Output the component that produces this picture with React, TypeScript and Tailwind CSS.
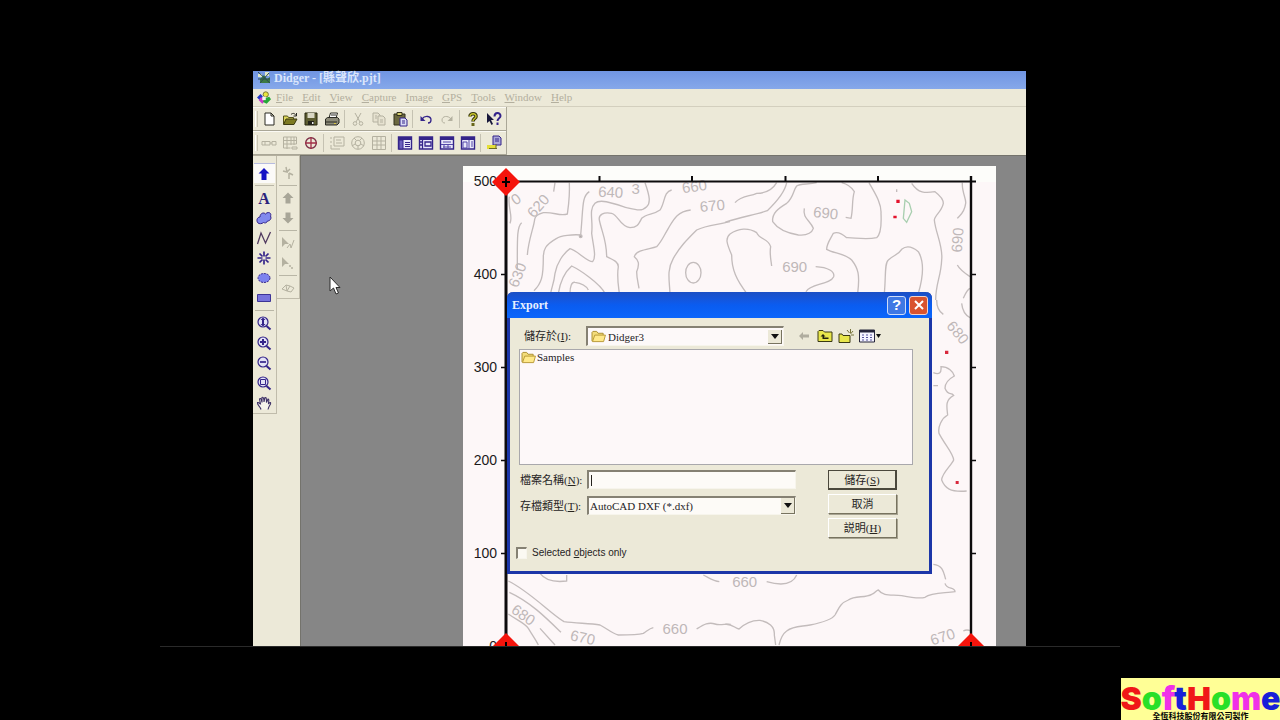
import type { ReactNode } from "react";

const UI = "font-['Liberation_Serif','Noto_Sans_CJK_TC',serif]";

type Glyph = { name: string; art: ReactNode };

function Pic({ children }: { children: ReactNode }) {
  return (
    <svg viewBox="0 0 16 16" className="h-4 w-4 shrink-0" fill="none" aria-hidden="true">
      {children}
    </svg>
  );
}

const INK = "#2a2a22";
const NAVY = "#34248a";
const DIM = "#b4b1a0";

const standardGroups: Glyph[][] = [
  [
    { name: "New", art: <path d="M4 2h6l3 3v9H4zM10 2v3h3" fill="#fff" stroke={INK} /> },
    {
      name: "Open",
      art: (
        <>
          <path d="M1.5 13V5h4l1 1.500h5V8" fill="#dcd65a" stroke="#55521c" />
          <path d="M1.500 13.500L4 8h11l-3 5.500z" fill="#7d7a22" stroke="#3c3a12" />
          <path d="M9 3.500c2-2 4-1 5 1M14.500 2v3h-3" stroke={INK} />
        </>
      ),
    },
    {
      name: "Save",
      art: (
        <>
          <path d="M2 2h12v12H2z" fill="#5c5c30" stroke="#26260f" />
          <path d="M4.500 2h7v5h-7z" fill="#d9d7c4" />
          <path d="M5 10h6v4H5z" fill="#23231a" />
          <path d="M9 11h1.500v2H9z" fill="#eee" />
        </>
      ),
    },
    {
      name: "Print",
      art: (
        <>
          <path d="M5 7l1.500-5h7L12 7" fill="#fff" stroke={INK} />
          <path d="M1.500 8l2-1.500h10L15 8v4l-2 2H1.500z" fill="#8c8a78" stroke={INK} />
          <path d="M2 11h11M7 4h5" stroke={INK} />
          <path d="M10 12.500h2" stroke="#d9c640" />
        </>
      ),
    },
  ],
  [
    {
      name: "Cut",
      art: (
        <>
          <path d="M5 2l5 9M11 2L6 11" stroke={DIM} />
          <circle cx="5" cy="12.500" r="1.800" stroke={DIM} />
          <circle cx="11" cy="12.500" r="1.800" stroke={DIM} />
        </>
      ),
    },
    {
      name: "Copy",
      art: (
        <>
          <path d="M2 2h5l2 2v7H2z" fill="#e6e2d0" stroke={DIM} />
          <path d="M7 5h5l2 2v7H7z" fill="#e6e2d0" stroke={DIM} />
          <path d="M4 5h2M4 7h2M9 9h3M9 11h3" stroke={DIM} />
        </>
      ),
    },
    {
      name: "Paste",
      art: (
        <>
          <path d="M2 3h11v11H2z" fill="#6b6840" stroke="#33311c" />
          <path d="M5 1.500h5v3H5z" fill="#d8d070" stroke="#33311c" />
          <path d="M8 7h5l2 2v6H8z" fill="#d9dbf5" stroke={NAVY} />
          <path d="M10 10h3M10 12h3" stroke={NAVY} />
        </>
      ),
    },
  ],
  [
    {
      name: "Undo",
      art: (
        <>
          <path d="M4 8c3-4 9-3 9 1 0 2-1 3-3 3" stroke={NAVY} strokeWidth="1.300" />
          <path d="M2.500 5v5h5z" fill={NAVY} />
        </>
      ),
    },
    {
      name: "Redo",
      art: (
        <>
          <path d="M12 8C9 4 3 5 3 9c0 2 1 3 3 3" stroke={DIM} />
          <path d="M13.500 5v5h-5z" fill={DIM} />
        </>
      ),
    },
  ],
  [
    {
      name: "Help",
      art: (
        <>
          <path d="M5 5.500C5 1.500 11.500 2 11 5.500 11 7.500 8 7.500 8 10.500" stroke="#38370f" strokeWidth="3.600" />
          <path d="M5 5.500C5 1.500 11.500 2 11 5.500 11 7.500 8 7.500 8 10" stroke="#c9c62a" strokeWidth="1.400" />
          <path d="M6.500 12h3v3h-3z" fill="#68661a" />
        </>
      ),
    },
    {
      name: "Context help",
      art: (
        <>
          <path d="M1 2v10l2.500-2 2 4 1.500-1-2-4h3z" fill="#17173a" />
          <path d="M8.500 5.500c0-4.500 6-4.500 6-.5 0 2.500-3 2-3 5M11.500 11.500v2.500" stroke={NAVY} strokeWidth="2" />
        </>
      ),
    },
  ],
];

const panel = (inner: ReactNode) => (
  <>
    <path d="M1.500 2h13v12h-13z" fill="#e9e8fa" stroke={NAVY} strokeWidth="1.400" />
    <path d="M1 2h14v3H1z" fill={NAVY} />
    {inner}
  </>
);

const digitizeGroups: Glyph[][] = [
  [
    { name: "Tablet", art: <path d="M1 6.500h8v3.500H1zM4 6.500V10M9 8h2M11 6.500h4V10h-4z" stroke={DIM} /> },
    { name: "Calibrate grid", art: <path d="M1.500 2h13v7h-13zM5 2v12M9 2v8M12 2v8M1.500 5.500h13M1.500 9v4h7M10 12h5v2h-5z" stroke={DIM} /> },
    {
      name: "Calibrate",
      art: (
        <>
          <circle cx="8" cy="8" r="5.300" stroke="#7c2d45" strokeWidth="1.400" />
          <path d="M8 2v12M2 8h12" stroke="#a13048" strokeWidth="1.300" />
        </>
      ),
    },
  ],
  [
    { name: "Image layers", art: <path d="M5 2h10v9H5zM2 2v2M2 6v2M2 10v4h9M7 5h5M7 8h6" stroke={DIM} /> },
    {
      name: "Wheel",
      art: (
        <>
          <circle cx="8" cy="8" r="6.300" stroke={DIM} />
          <circle cx="8" cy="8" r="2.800" stroke={DIM} />
          <path d="M6 5L4 3M10 5l2-2M5 9l-3 2M11 9l3 2M8 11v3" stroke={DIM} />
        </>
      ),
    },
    { name: "Grid", art: <path d="M1.500 1.500h13v13h-13zM6 1.500v13M10 1.500v13M1.500 6h13M1.500 10h13" stroke={DIM} /> },
  ],
  [
    { name: "Left pane", art: panel(<path d="M2 5h4v9H2zM8 7.500h5M8 9.500h5M8 11.500h5" fill="#6b60bd" stroke={NAVY} />) },
    { name: "Wide pane", art: panel(<path d="M4.500 5v9M7 7h6v4H7zM2 7h2M2 10h2" stroke={NAVY} strokeWidth="1.300" />) },
    { name: "Bottom pane", art: panel(<path d="M2 9.500h12M4 7h8M4 12h8M5 10v3M9 10v3" stroke="#5347a8" />) },
    { name: "Data pane", art: panel(<path d="M3 7h4v6H3zM9 5v9M11 7h2M11 9h2M11 11h2" stroke="#5347a8" />) },
  ],
  [
    {
      name: "Export image",
      art: (
        <>
          <path d="M7 1h6l2 2v7H7z" fill="#aaa7d8" stroke={NAVY} />
          <path d="M9 4h4M9 6h4" stroke={NAVY} />
          <path d="M1 10h9v4H1z" fill="#e5df38" />
          <path d="M3 13.500h8M10 9v4" stroke="#6d6922" />
        </>
      ),
    },
  ],
];

const lens = (inner: ReactNode) => (
  <>
    <circle cx="7" cy="7" r="5" fill="#e2e1f5" stroke={NAVY} strokeWidth="1.200" />
    <path d="M10.500 11l4 3.500" stroke={NAVY} strokeWidth="2" />
    {inner}
  </>
);

const drawTools: Glyph[][] = [
  [{ name: "Select", art: <path d="M8 2l5.500 5.500H10.500V14h-5V7.500H2.500z" fill="#1512c4" /> }],
  [
    { name: "Text", art: <text x="8" y="13.500" textAnchor="middle" fontSize="16" fontWeight="700" fontFamily="Liberation Serif, serif" fill="#2b237c">A</text> },
    { name: "Area", art: <path d="M2 13C0 11 1 7 4 7c0-4 4-5 5.500-3C12 1 16 3 14.500 6c1.500 3-1 5-3 5-1 2.500-3 2-4 1.500C6 14 3 14 2 13z" fill="#8189ee" stroke={NAVY} /> },
    { name: "Polyline", art: <path d="M1.500 14L5 3l4.500 10L14.500 2" stroke="#50395f" strokeWidth="1.300" /> },
    { name: "Point", art: <path d="M8 1.500v5M8 9.500v5M1.500 8h5M9.500 8h5M3.500 3.500l3 3M12.500 3.500l-3 3M3.500 12.500l3-3M12.500 12.500l-3-3" stroke={NAVY} strokeWidth="1.700" /> },
    { name: "Ellipse", art: <ellipse cx="8" cy="8" rx="6" ry="4.500" fill="#7c82ee" stroke={NAVY} strokeDasharray="2 1" /> },
    { name: "Rectangle", art: <path d="M1.500 4.500h13v7h-13z" fill="#7773dc" stroke="#3d3496" /> },
  ],
  [
    { name: "Zoom extents", art: lens(<path d="M7 2.500L9.500 5h-1.500v4h1.500L7 11.500 4.500 9H6V5H4.500z" fill={NAVY} />) },
    { name: "Zoom in", art: lens(<path d="M7 4v6M4 7h6" stroke={NAVY} strokeWidth="2" />) },
    { name: "Zoom out", art: lens(<path d="M4 7h6" stroke={NAVY} strokeWidth="1.700" />) },
    { name: "Zoom area", art: lens(<path d="M4.500 4.500h5v5h-5z" stroke={NAVY} />) },
    { name: "Pan", art: <path d="M5 14.500C4 11 1 10 1.500 7.500 3 7 4 9 4.500 9L3.500 4C5 2.500 5.500 5 6 7.500L6 2.500C7.500 1.500 8 4 8 7l1-4.500C10.500 2 10.500 5 10.500 7.500L12 4c1.500 0 .5 3 .5 4.500 2-1.500 2.500-1 2 .5-1 2-2 3-2.500 5.500" fill="#f6f4ec" stroke="#3d3066" strokeWidth="1.100" /> },
  ],
];

const editTools: Glyph[][] = [
  [{ name: "Reshape", art: <path d="M6 2l1 5-4-1M7 7l3-3M9 8l4 2M9 8v6" stroke={DIM} strokeWidth="1.500" /> }],
  [
    { name: "Move up", art: <path d="M8 2.500l5.500 5.500h-3v5.500h-5V8h-3z" fill="#a8a698" /> },
    { name: "Move down", art: <path d="M8 13.500L2.500 8h3V2.500h5V8h3z" fill="#a8a698" /> },
  ],
  [
    { name: "Node edit", art: <><path d="M2 2v10l3-3h4z" fill={DIM} /><path d="M7 13l3-4 1 4 3-8" stroke={DIM} /></> },
    { name: "Node pick", art: <><path d="M2 2v10l3-3h4z" fill={DIM} /><path d="M9 11h2M11 13h2" stroke={DIM} strokeWidth="1.500" /></> },
  ],
  [{ name: "Join", art: <path d="M2 9l4-4 4 1 4 2-3 4-4-1zM6 5l1 6M10 6l-3 5" stroke={DIM} /> }],
];

function ToolRow({ groups, label }: { groups: Glyph[][]; label: string }) {
  return (
    <div role="toolbar" aria-label={label} className="flex h-6 items-center border-r border-b border-[#aaa797] pl-[2px] shadow-[inset_0_1px_#fbfaf4]">
      <span className="h-4 w-[3px] border-x border-l-white border-r-[#c9c5b4]" />
      {groups.map((g, i) => (
        <div key={i} className="flex items-center">
          {i > 0 && <span className="mx-[2px] h-[18px] w-px bg-[#c5c2b2]" />}
          {g.map((t) => (
            <button key={t.name} aria-label={t.name} className="flex h-5 w-[21px] items-center justify-center">
              <Pic>{t.art}</Pic>
            </button>
          ))}
        </div>
      ))}
    </div>
  );
}

function ToolColumn({ groups, label, active }: { groups: Glyph[][]; label: string; active?: string }) {
  return (
    <div role="toolbar" aria-label={label} className="flex flex-1 flex-col self-start border-r border-b border-[#c0bcab] pt-[7px]">
      {groups.map((g, i) => (
        <div key={i} className="flex flex-col">
          {i > 0 && <span className="mx-[2px] my-[2px] h-px bg-[#b9b6a6]" />}
          {g.map((t) => (
            <button
              key={t.name}
              aria-label={t.name}
              className={t.name === active ? "mx-px flex h-5 items-center justify-center border-t border-[#b7bce0] bg-[#fbfaf8]" : "mx-px flex h-5 items-center justify-center"}
            >
              <Pic>{t.art}</Pic>
            </button>
          ))}
        </div>
      ))}
    </div>
  );
}

const menus = ["File", "Edit", "View", "Capture", "Image", "GPS", "Tools", "Window", "Help"];

function Num({ x, y, r = 0, children }: { x: number; y: number; r?: number; children: string }) {
  return (
    <text
      x={x}
      y={y + 15}
      transform={`rotate(${r} ${x} ${y})`}
      textAnchor="middle"
      fontFamily="Liberation Sans, sans-serif"
      fontSize="45"
      fill="#bfb8b8"
      stroke="none"
    >
      {children}
    </text>
  );
}

function Diamond({ x, y }: { x: number; y: number }) {
  return (
    <g>
      <path d={`M${x} ${y - 14}l14 14-14 14-14-14z`} fill="#f5140c" />
      <path d={`M${x - 4} ${y}h8M${x} ${y - 5}v10`} stroke="#000" strokeWidth="2" />
    </g>
  );
}

function ContourMap() {
  return (
    <svg viewBox="463 166 533 480" className="h-[480px] w-[533px] shrink-0 bg-[#fdf7f8]" fill="none" role="img" aria-label="Contour map">
      <path d="M463 166h533v16H463z" fill="#fdfdfa" />
      <g stroke="#c3bcbc" strokeWidth="4">
        <g transform="translate(460 160) scale(.33333)">
          <path d="M328 68C330 110 325 140 322 162C300 170 280 155 250 158C235 162 225 170 224 178C222 200 205 240 202 285M285 68L281 95" />
          <path d="M185 188C170 200 172 240 172 330M148 110C142 140 160 170 150 190" />
          <path d="M388 95C365 110 370 140 362 225C340 222 300 228 290 235C255 255 250 270 250 290C250 350 245 370 222 392" />
          <path d="M555 68C570 110 572 130 560 140C545 155 530 150 500 143C460 130 420 115 405 130C385 150 400 180 395 220C400 260 410 290 398 305C380 305 350 270 330 266C310 280 290 310 285 340C282 370 275 380 272 400" />
          <path d="M635 90C610 95 615 130 600 150C580 165 560 160 545 175C535 195 530 203 510 203C480 200 475 165 455 160C430 155 415 165 418 180C425 215 440 240 440 290C460 300 475 305 475 320C470 350 475 375 478 400" />
          <path d="M295 400C300 370 310 340 335 318C360 330 420 370 435 400M330 400C330 380 335 365 345 367C370 370 380 380 385 390" />
          <path d="M692 150C650 155 640 180 625 205C610 230 605 245 590 260C570 268 530 268 523 290C535 300 540 310 530 335C530 355 535 370 537 385" />
          <path d="M810 185C770 195 740 195 710 210C680 240 660 260 640 295C620 330 628 360 630 400" />
          <ellipse cx="700" cy="338" rx="23" ry="31" />
          <circle cx="362" cy="229" r="4" fill="#aaa3a3" />
          <Num x={168} y={118} r={-35}>0</Num>
          <Num x={235} y={138} r={-48}>620</Num>
          <Num x={173} y={345} r={-68}>630</Num>
          <Num x={452} y={97} r={3}>640</Num>
          <Num x={527} y={88}>3</Num>
          <Num x={703} y={80} r={-8}>660</Num>
          <Num x={757} y={138} r={-5}>670</Num>
        </g>
        <g transform="translate(725 160) scale(.33333)">
          <path d="M30 128C50 105 75 110 95 100C130 100 145 85 155 68M0 187C50 170 90 165 127 152C150 130 180 95 185 68" />
          <path d="M350 68C365 72 380 82 388 95C380 120 385 145 378 175L362 172M275 68C250 74 225 70 215 78C205 90 205 115 185 130C160 145 140 160 143 185C160 210 190 220 220 225C250 228 262 215 265 205C255 180 232 175 238 145" />
          <path d="M432 68C450 100 470 130 468 160C470 200 465 225 455 233C420 240 385 232 365 233C350 220 335 215 325 220C318 235 305 250 305 268C325 280 360 280 380 300C400 325 405 345 398 400" />
          <path d="M65 400C35 360 20 330 20 285C5 250 0 235 15 222C40 205 70 202 95 218C105 240 130 235 137 260C133 280 138 300 140 318" />
          <path d="M272 320C310 322 330 335 326 350C315 375 255 370 243 395M478 400C483 350 478 310 490 300C505 285 520 285 530 268C545 255 560 258 580 275C595 300 598 340 580 400" />
          <path d="M560 70C580 100 600 100 630 95C650 110 655 120 655 130C650 155 630 165 628 180C632 220 655 260 650 300C648 350 632 370 632 420" />
          <path d="M712 68C710 95 725 120 722 130C718 160 705 165 697 175M697 315C705 330 720 340 735 350M735 385C725 390 722 400 715 415M515 88v8" />
          <path d="M540 120L553 130L560 155L545 187L535 175Z" stroke="#a9cfb0" />
          <path d="M514 119h10v10h-10zM505 167h10v8h-10z" fill="#e3122c" stroke="none" />
          <Num x={302} y={160} r={6}>690</Num>
          <Num x={209} y={320}>690</Num>
          <Num x={698} y={240} r={-86}>690</Num>
        </g>
        <g transform="translate(715 290) scale(.33333)">
          <path d="M665 30C665 50 672 65 685 73M740 40C742 60 750 75 765 83" />
          <path d="M655 248C672 255 680 250 678 230C700 230 715 245 718 258C705 265 690 275 690 295C700 320 708 305 716 316C690 330 695 350 698 375C680 385 668 410 672 430C690 465 715 490 716 510C710 525 680 550 680 570C690 595 705 607 755 603M655 287h14M655 823C680 825 685 840 692 868" />
          <path d="M690 182h10v10h-10zM722 573h9v9h-9z" fill="#d8283c" stroke="none" />
          <Num x={728} y={128} r={50}>680</Num>
        </g>
        <g transform="translate(460 565) scale(.33333)">
          <path d="M240 25C255 45 280 53 320 48V30M730 30C750 40 760 48 778 50M145 48C210 80 270 145 312 170C350 175 390 175 420 180C440 190 455 205 475 210C510 210 540 208 550 205C565 195 570 190 580 188" />
          <path d="M148 82C210 110 260 160 303 202M145 147C170 165 195 175 205 190C220 215 228 225 235 240M240 190L285 240M710 192C730 180 745 170 765 177C780 182 800 175 812 178" />
          <Num x={190} y={150} r={35}>680</Num>
          <Num x={368} y={218} r={12}>670</Num>
          <Num x={645} y={192}>660</Num>
        </g>
        <g transform="translate(725 565) scale(.33333)">
          <path d="M0 178C20 175 30 190 42 192C60 175 80 165 105 166C130 170 150 185 148 210L152 240M162 240C168 215 175 205 185 198C205 182 230 185 255 180C280 175 320 165 330 150C342 130 345 115 370 105C390 90 420 100 440 88C450 85 455 75 460 75C475 95 500 88 530 92C560 98 590 100 600 97C620 82 660 85 690 80C690 65 665 75 660 55M125 50C160 60 200 65 215 30M715 198C725 192 732 195 738 198" />
          <Num x={59} y={50}>660</Num>
          <Num x={653} y={216} r={-18}>670</Num>
        </g>
      </g>
      <g stroke="#0d0b0c">
        <path d="M506 181V646" strokeWidth="3" />
        <path d="M971 176V646" strokeWidth="2.400" />
        <path d="M501 181.500H976" strokeWidth="1.800" />
        <path d="M599.500 176v6M692 176v6M785.500 176v6M878 176v6" strokeWidth="2" />
        <path d="M501 274.500h5M501 367.500h5M501 460.500h5M501 553.500h5M971 274.500h5M971 367.500h5M971 460.500h5M971 553.500h5" strokeWidth="1.500" />
      </g>
      <g fontFamily="Liberation Sans, sans-serif" fontSize="14" fill="#1c1a1b" textAnchor="end">
        <text x="497" y="186">500</text>
        <text x="497" y="279">400</text>
        <text x="497" y="372">300</text>
        <text x="497" y="465">200</text>
        <text x="497" y="558">100</text>
        <text x="497" y="651">0</text>
      </g>
      <Diamond x={506} y={182} />
      <Diamond x={506} y={647} />
      <Diamond x={971} y={647} />
    </svg>
  );
}

function Folder() {
  return (
    <svg viewBox="0 0 16 14" className="h-[13px] w-[15px] shrink-0" aria-hidden="true">
      <path d="M1 12V2.500L2 1.500h4l1.500 2H13v2" fill="#f3dc7a" stroke="#a98b2c" />
      <path d="M1.500 12.500L4 5.500h11.500l-2 7z" fill="#ffe98a" stroke="#b59632" />
    </svg>
  );
}

function Arrow() {
  return (
    <span className="pointer-events-none absolute top-[2px] right-px bottom-px flex w-[14px] items-center justify-center border-r border-b border-[#77735f] bg-[#ece9d8]">
      <svg viewBox="0 0 8 5" className="h-[5px] w-2" aria-hidden="true">
        <path d="M0 0h8L4 5z" fill="#111" />
      </svg>
    </span>
  );
}

const sunken = "border-t-2 border-l-2 border-t-[#858173] border-l-[#858173] border-r border-b border-r-[#f7f5ec] border-b-[#f7f5ec]";

function ExportDialog() {
  return (
    <section role="dialog" aria-label="Export" className={`${UI} absolute top-[136px] left-[206px] w-[425px] rounded-t-[6px] border-x-[3px] border-b-[3px] border-[#1c36a8] bg-[#ece9d8] text-[11px] leading-[14px] text-[#25231e]`}>
      <header className="-mx-[3px] flex h-[26px] items-center gap-[3px] rounded-t-[6px] bg-linear-to-b from-[#1b4fc4] via-[#0a5cf0] to-[#0b66fb] pr-1 pl-[5px]">
        <h2 className="flex-1 text-[12px] font-bold text-[#e8f0ff]">Export</h2>
        <button aria-label="Help" className="flex h-[19px] w-[19px] items-center justify-center rounded-[3px] border border-[#cfdcf8] bg-[#3f78e4] font-['Liberation_Sans',sans-serif] text-[15px] font-bold text-white">?</button>
        <button aria-label="Close" className="flex h-[19px] w-[19px] items-center justify-center rounded-[3px] border border-[#f3d3c8] bg-[#d9532f]">
          <svg viewBox="0 0 12 12" className="h-3 w-3" aria-hidden="true">
            <path d="M2 2l8 8M10 2l-8 8" stroke="#fff" strokeWidth="2" />
          </svg>
        </button>
      </header>
      <div className="flex items-center pt-2 pr-12 pl-[14px]">
        <label htmlFor="folder" className="w-[62px]">儲存於(<u>I</u>):</label>
        <div className={`relative flex h-5 flex-1 items-center bg-[#fdf9f9] pl-[3px] ${sunken}`}>
          <Folder />
          <select id="folder" className="h-full flex-1 appearance-none bg-transparent pl-[2px] outline-none">
            <option>Didger3</option>
          </select>
          <Arrow />
        </div>
        <div className="ml-3 flex items-center gap-[5px]">
          <button aria-label="Back"><Pic><path d="M3 8l4-4v2.500h6v3H7V12z" fill="#b0ad9f" /></Pic></button>
          <button aria-label="Up one level">
            <Pic>
              <path d="M1 13.500v-10l1-1h4l1.500 1.500H15v9.500z" fill="#e8e64c" stroke="#3a3912" />
              <path d="M6 6L3.500 8.500h2v2.500h6V9.500H7v-1h1.500z" fill="#24230c" />
            </Pic>
          </button>
          <button aria-label="New folder">
            <Pic>
              <path d="M1 14.500V6h3l1 1.500h7v7z" fill="#e8e64c" stroke="#3a3912" />
              <path d="M12.500 1v4M9 2l2.500 3M15 3l-2.500 3M13 7h3" stroke="#77743a" />
            </Pic>
          </button>
          <button aria-label="View" className="flex items-center gap-px">
            <Pic>
              <path d="M.5 2h15v12H.5z" fill="#f4f3ff" stroke="#25243a" />
              <path d="M0 2h16v2.500H0z" fill="#25243a" />
              <path d="M3 7h2M7 7h2M11 7h2M3 9.500h2M7 9.500h2M11 9.500h2M3 12h2M7 12h2M11 12h2" stroke="#55529a" />
            </Pic>
            <svg viewBox="0 0 5 4" className="h-1 w-[5px]" aria-hidden="true"><path d="M0 0h5L2.500 4z" fill="#111" /></svg>
          </button>
        </div>
      </div>
      <ul className="mt-[3px] mr-4 ml-[9px] h-[116px] border border-[#a9a8ac] bg-[#fdf8f9] px-px">
        <li className="flex items-center gap-px"><Folder />Samples</li>
      </ul>
      <div className="flex items-start justify-between pt-[5px] pr-8 pl-[10px]">
        <div className="flex w-[276px] flex-col gap-[7px]">
          <div className="flex items-center">
            <label htmlFor="fname" className="w-[67px]">檔案名稱(<u>N</u>):</label>
            <div className="relative flex flex-1">
              <input id="fname" className={`h-[19px] w-full bg-[#fdfbf7] px-1 outline-none ${sunken}`} />
              <span className="absolute top-[5px] left-1 h-[11px] w-px bg-[#25231e]" />
            </div>
          </div>
          <div className="flex items-center">
            <label htmlFor="ftype" className="w-[67px]">存檔類型(<u>T</u>):</label>
            <div className="relative flex flex-1">
              <select id="ftype" className={`h-[19px] w-full appearance-none bg-[#fdfbf7] pl-px outline-none ${sunken}`}>
                <option>AutoCAD DXF (*.dxf)</option>
              </select>
              <Arrow />
            </div>
          </div>
        </div>
        <div className="flex w-[69px] flex-col gap-1">
          <button className="h-5 border border-r-2 border-b-2 border-[#4b483c]">儲存(<u>S</u>)</button>
          <button className="h-5 border border-t-white border-r-[#77735f] border-b-[#77735f] border-l-white shadow-[1px_1px_#a8a492]">取消</button>
          <button className="h-5 border border-t-white border-r-[#77735f] border-b-[#77735f] border-l-white shadow-[1px_1px_#a8a492]">説明(<u>H</u>)</button>
        </div>
      </div>
      <label className="flex items-center gap-[5px] pt-2 pb-[11px] pl-[6px] font-['Liberation_Sans',sans-serif] text-[10px]">
        <input type="checkbox" className={`h-3 w-[11px] appearance-none bg-[#fbf9f2] ${sunken}`} />
        <span>Selected <u>o</u>bjects only</span>
      </label>
    </section>
  );
}

const brand = [
  ["S", "text-[#f01818]"],
  ["o", "text-[#28e028]"],
  ["f", "text-[#f030e8]"],
  ["t", "text-[#1820d8]"],
  ["H", "text-[#f01818]"],
  ["o", "text-[#28e028]"],
  ["m", "text-[#f030e8]"],
  ["e", "text-[#1820d8]"],
];

export default function App() {
  return (
    <div className="flex h-screen flex-col overflow-hidden bg-black pt-[71px]">
      <main className={`${UI} mr-[254px] ml-[253px] flex min-h-0 flex-1 flex-col bg-[#ece9d8]`}>
        <header className="flex h-[18px] shrink-0 items-start gap-[3px] bg-linear-to-b from-[#7095e2] to-[#86a8ea] pl-1">
          <svg viewBox="0 0 14 14" className="h-[14px] w-[14px]" aria-hidden="true">
            <path d="M1 3h4v3H1zM8 1h4v4H8z" fill="#dfe8c8" />
            <path d="M3 8l4-4 3 4 3-2v6H3z" fill="#3d7a42" />
            <path d="M1 1l12 11M12 2L3 12M1 8h12" stroke="#2b4a50" />
          </svg>
          <h1 className="text-[12px] leading-[14px] font-bold text-[#dbe6fb]">Didger - [縣聲欣.pjt]</h1>
        </header>
        <nav aria-label="Main menu" className="flex h-[18px] shrink-0 items-center gap-[9px] border-b border-[#d3cfbe] pl-1 text-[11px] text-[#b3af9e]">
          <svg viewBox="0 0 16 16" className="-mr-1 h-[15px] w-[14px]" aria-hidden="true">
            <path d="M0 8l4-4 4 4-4 4z" fill="#2038c8" />
            <path d="M4 8l5 0 0 4-3 3-4-4z" fill="#c838c8" />
            <circle cx="10" cy="4.500" r="3" fill="#e8e640" stroke="#6a6a30" />
            <path d="M8 9l6-2 2 3-5 5-4-2z" fill="#24a838" />
            <path d="M6 7h4v4H6z" fill="#f4f4f4" />
          </svg>
          {menus.map((m) => (
            <button key={m}>
              <u>{m[0]}</u>
              {m.slice(1)}
            </button>
          ))}
        </nav>
        <div className="flex w-[254px] shrink-0 flex-col">
          <ToolRow groups={standardGroups} label="Standard" />
          <ToolRow groups={digitizeGroups} label="Digitize" />
        </div>
        <div className="flex min-h-0 flex-1">
          <aside className="flex w-[47px] shrink-0 border-t border-[#b3af9e]">
            <ToolColumn groups={drawTools} label="Draw" active="Select" />
            <ToolColumn groups={editTools} label="Edit" />
          </aside>
          <div className="relative flex min-w-0 flex-1 items-start justify-end overflow-hidden border-t border-l border-[#74736c] bg-[#868686] pt-[10px] pr-[30px]">
            <ContourMap />
            <ExportDialog />
            <svg viewBox="0 0 12 20" className="absolute top-[120px] left-7 h-5 w-3" aria-hidden="true">
              <path d="M1 1v14l3.500-3 2.500 6 2.500-1L7 11.500h4z" fill="#fff" stroke="#2c2c2c" />
            </svg>
          </div>
        </div>
      </main>
      <footer className="flex h-[74px] shrink-0 flex-col justify-between">
        <hr className="mx-[160px] border-t border-[#2a2a2a]" />
        <div className="flex h-[42px] w-[159px] flex-col items-center self-end overflow-hidden bg-[#ffff96] pt-2">
          <p className="font-['Inter',sans-serif] text-[32px] leading-[26px] font-black whitespace-nowrap">
            {brand.map(([ch, tone], i) => (
              <span key={i} className={tone}>{ch}</span>
            ))}
          </p>
          <p className="font-['Noto_Sans_CJK_TC',sans-serif] text-[8px] leading-[8px] font-bold whitespace-nowrap text-black">全恆科技股份有限公司製作</p>
        </div>
      </footer>
    </div>
  );
}
